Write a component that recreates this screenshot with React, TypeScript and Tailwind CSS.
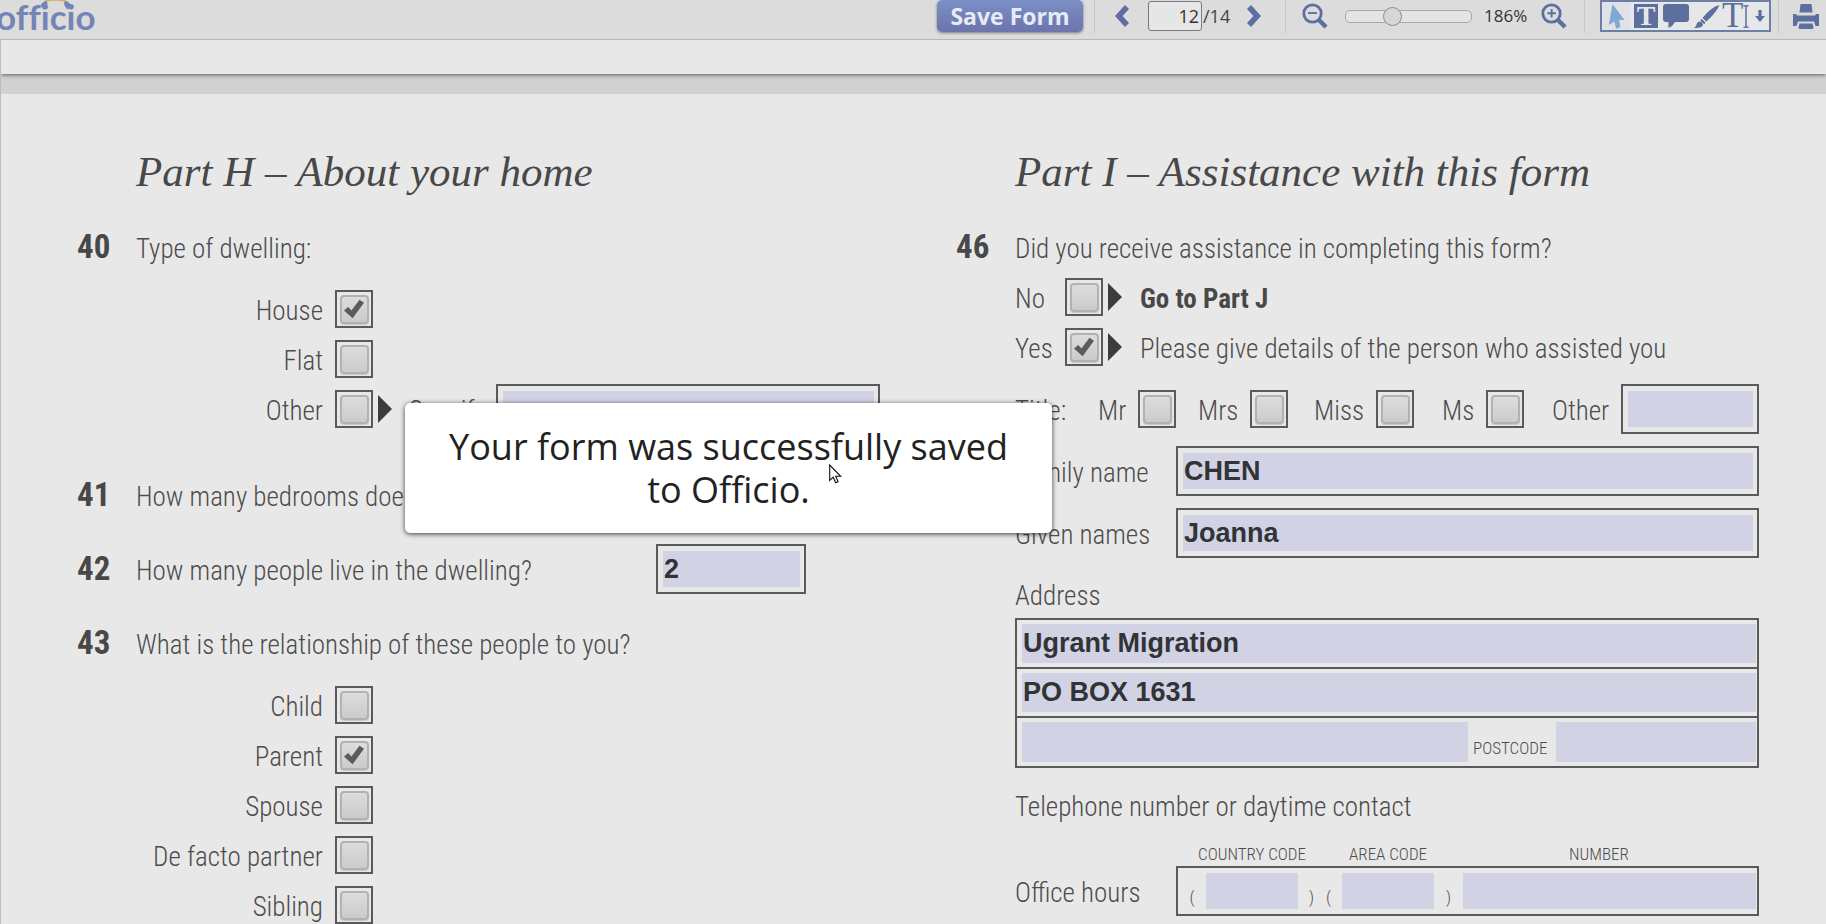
import type { ReactNode } from "react";

const BODY = "font-['Roboto_Condensed','Roboto',sans-serif] font-light";
const UI = "font-['Open_Sans','Noto_Sans',sans-serif]";

function Separator() {
  return <span className="h-[34px] w-px shrink-0 bg-[#c6c6c6]" />;
}

function Magnifier({ plus }: { plus?: boolean }) {
  return (
    <svg viewBox="0 0 26 26" className="h-[26px] w-[26px]" fill="none" stroke="#5d6f9e">
      <circle cx="10.5" cy="10.5" r="8.7" strokeWidth="2.8" />
      <path d="M17 17l7 7" strokeWidth="4.4" />
      <path d={plus ? "M6.3 10.3h8.6M10.6 6v8.6" : "M6 10h9"} strokeWidth="1.9" />
    </svg>
  );
}

function Toolbar() {
  return (
    <header className={`flex h-10 shrink-0 items-start overflow-hidden border-b border-[#b8b8b8] bg-[#dcdcdc] pr-[7px] ${UI}`}>
      <a href="#" className="relative -ml-1 block h-[39px] font-['Lato',sans-serif] text-[35px] leading-[33px] font-bold text-[#7385b4] [font-variant-ligatures:none]">
        officio
        <svg viewBox="0 0 34 10" className="absolute top-0 left-[43px] h-[10px] w-[34px]">
          <path d="M6 1.5C10-1 23-1 27 1.5" fill="none" stroke="#d9b25c" strokeWidth="2" />
          <path d="M6.500 1l2 1.500c-.2 3-1.200 5.500-4 7L1.500 5.500C2.500 3 4 2 6.500 1z" fill="#7385b4" />
          <path d="M27 1l-2 1.500c.2 3 1.200 5.500 4 7l3-4C31 3 29.500 2 27 1z" fill="#7385b4" />
        </svg>
      </a>
      <div className="ml-auto flex h-8 items-center">
        <button className="mr-[11px] h-8 w-[146px] rounded-[5px] bg-linear-to-b from-[#7b8fc6] to-[#6d74ac] text-[23px] leading-8 font-bold text-[#e6ebf6] shadow-[0_1px_3px_rgba(0,0,0,0.45)]">
          Save Form
        </button>
        <Separator />
        <button aria-label="Previous page" className="ml-5 w-[14px]">
          <svg viewBox="0 0 14 22" className="h-[22px] w-[14px]">
            <path d="M10 0l4 4-6.500 7 6.500 7-4 4L0 11z" fill="#5d6f9e" />
          </svg>
        </button>
        <input
          aria-label="Page"
          defaultValue="12"
          className="ml-[19px] h-[30px] w-[54px] rounded-[3px] border border-[#7a7a7a] bg-[#e6e6e6] px-0.5 text-right text-[18px] text-[#333]"
        />
        <span className="ml-px w-[30px] text-[18px] text-[#444]">/14</span>
        <button aria-label="Next page" className="ml-[14px] w-[15px]">
          <svg viewBox="0 0 14 22" className="h-[22px] w-[14px]">
            <path d="M4 0L0 4l6.500 7L0 18l4 4 10-11z" fill="#5d6f9e" />
          </svg>
        </button>
        <span className="w-[23px]" />
        <Separator />
        <button aria-label="Zoom out" className="ml-4 w-[26px]"><Magnifier /></button>
        <input
          type="range"
          aria-label="Zoom"
          defaultValue={35}
          className="ml-[17px] h-[13px] w-[127px] appearance-none rounded-[5px] border border-[#a9a9a9] bg-[#e4e4e4] [&::-webkit-slider-thumb]:h-[19px] [&::-webkit-slider-thumb]:w-[19px] [&::-webkit-slider-thumb]:appearance-none [&::-webkit-slider-thumb]:rounded-full [&::-webkit-slider-thumb]:border [&::-webkit-slider-thumb]:border-[#8c8c8c] [&::-webkit-slider-thumb]:bg-[#d6d6d6]"
        />
        <span className="ml-3 w-11 text-[17px] text-[#333]">186%</span>
        <button aria-label="Zoom in" className="mr-[17px] ml-[13px] w-[26px]"><Magnifier plus /></button>
        <Separator />
        <div className="mr-[7px] ml-[15px] flex h-8 w-[171px] items-center border-2 border-[#6d7fa3] bg-[#e6e7e8] text-[#5d6f9e]">
          <button aria-label="Select" className="flex h-full w-7 shrink-0 items-center justify-center bg-[#dfe3e8]">
            <svg viewBox="0 0 17 25" className="h-[25px] w-[17px]">
              <path d="M4.500 0l12 16-5.500-.2 1.500 7.400-4.300 1.500-2-7.200L.8 21z" fill="#7fa9d4" />
            </svg>
          </button>
          <button aria-label="Highlight text" className="ml-1 h-6 w-6 shrink-0 bg-[#5d6f9e] font-['Liberation_Serif',serif] text-[28px] leading-6 font-bold text-[#e6e7e8]">
            T
          </button>
          <button aria-label="Comment" className="ml-[5px] w-[26px] shrink-0">
            <svg viewBox="0 0 26 24" className="h-6 w-[26px]" fill="currentColor">
              <path d="M3 0h20q3 0 3 3v12q0 3-3 3H12q-2 4-6.500 6V18H3q-3 0-3-3V3q0-3 3-3z" />
            </svg>
          </button>
          <button aria-label="Brush" className="ml-[5px] w-[26px] shrink-0">
            <svg viewBox="0 0 26 23" className="h-[23px] w-[26px]" fill="currentColor">
              <path d="M25.500 0Q17 2 8.500 13l3.800 3.600Q22 8 25.500 0z" />
              <path d="M7.600 14l3.900 3.600-1.300 1.700-4-3.600zM5.300 16.400q3.500.7 3.700 3.800-2.500 3.400-9 2.500 2.200-1 2.500-3.200.5-2.800 2.800-3.100z" />
            </svg>
          </button>
          <button aria-label="Insert text" className="ml-0.5 flex shrink-0 items-center font-['Liberation_Serif',serif] text-[35px] leading-7">
            T
            <svg viewBox="0 0 6 23" className="h-[23px] w-[6px]" fill="none" stroke="currentColor" strokeWidth="1.500">
              <path d="M.5.8H2Q3 .8 3 2v19q0 1.200-1 1.200H.5M5.500.8H4Q3 .8 3 2M3 21q0 1.200 1 1.200h1.500" />
            </svg>
          </button>
          <button aria-label="More tools" className="ml-[6px] w-[10px] shrink-0">
            <svg viewBox="0 0 10 12" className="h-3 w-[10px]" fill="currentColor">
              <path d="M3.400 0h3.200v6H10l-5 6-5-6h3.400z" />
            </svg>
          </button>
        </div>
        <Separator />
        <button aria-label="Print" className="ml-[14px] w-[26px]">
          <svg viewBox="0 0 26 25" className="h-[25px] w-[26px]" fill="#5d6f9e">
            <path d="M7.500 0h11l1 8.500h-13z" />
            <path d="M0 10h3.500v1.500h19V10H26v12h-3.500l-1.500-4.500H5L3.500 22H0z" />
            <path d="M6.500 19.500h13l1 4q0 1.500-1.500 1.500H7q-1.500 0-1.500-1.500z" />
          </svg>
        </button>
      </div>
    </header>
  );
}

function Check({ id, checked }: { id: string; checked?: boolean }) {
  return (
    <span className="relative flex h-[38px] w-[38px] shrink-0 items-center justify-center border-2 border-[#5a5a5a]">
      <input
        id={id}
        type="checkbox"
        defaultChecked={checked}
        className="peer h-[29px] w-[29px] appearance-none rounded-[4px] border-2 border-[#b2b2b2] bg-linear-to-b from-[#dcdcdc] to-[#cbcbcb] shadow-[0_1px_1px_rgba(0,0,0,0.15)]"
      />
      <svg viewBox="0 0 20 20" className="pointer-events-none absolute hidden h-5 w-5 peer-checked:block" fill="#5b5b5b">
        <path d="M0 11.500L4.200 8l3.200 3.500L15.500.8l4.500 3L8.600 19.300z" />
      </svg>
    </span>
  );
}

const FILL = "block h-full w-full min-w-0 bg-[#d1d2e4] font-['Liberation_Sans',Arial,sans-serif] text-[27px] font-bold text-[#323336] outline-none";

function Field({ id, value, className }: { id: string; value?: string; className: string }) {
  return (
    <div className={`h-[50px] border-2 border-[#5a5a5a] py-[5px] pr-1 pl-[5px] ${className}`}>
      <input id={id} defaultValue={value} className={`${FILL} px-px`} />
    </div>
  );
}

function Label({ htmlFor, className = "", children }: { htmlFor: string; className?: string; children: ReactNode }) {
  return (
    <label htmlFor={htmlFor} className={`h-[38px] shrink-0 leading-[42px] whitespace-nowrap ${className}`}>
      {children}
    </label>
  );
}

function Pointer() {
  return (
    <svg viewBox="0 0 14 28" className="ml-[5px] h-7 w-[14px] shrink-0" fill="#3c3c3c">
      <path d="M0 0l14 14L0 28z" />
    </svg>
  );
}

function Question({ n, className = "", children }: { n: number; className?: string; children: ReactNode }) {
  return (
    <div className={`flex h-[50px] items-center ${className}`}>
      <span className="h-[38px] w-[59px] shrink-0 text-[33px] leading-[38px] font-bold text-[#484848]">{n}</span>
      {children}
    </div>
  );
}

function Line({ children }: { children: ReactNode }) {
  return <p className="h-[38px] leading-[42px] whitespace-nowrap">{children}</p>;
}

function Heading({ children }: { children: ReactNode }) {
  return (
    <h2 className="mb-5 pl-[59px] font-['Liberation_Serif',serif] text-[43px] leading-[60px] font-normal whitespace-nowrap text-[#484848] italic">
      {children}
    </h2>
  );
}

function Option({ id, label, checked, children }: { id: string; label: string; checked?: boolean; children?: ReactNode }) {
  return (
    <div className="flex h-[50px] items-center">
      <Label htmlFor={id} className="mr-3 w-[187px] text-right">{label}</Label>
      <Check id={id} checked={checked} />
      {children}
    </div>
  );
}

function TitleOption({ id, label }: { id: string; label: string }) {
  return (
    <div className="flex items-center gap-3">
      <Label htmlFor={id}>{label}</Label>
      <Check id={id} />
    </div>
  );
}

function PartH() {
  return (
    <section>
      <Heading>Part H – About your home</Heading>
      <Question n={40}><Line>Type of dwelling:</Line></Question>
      <div className="mt-3 pl-[59px]">
        <Option id="house" label="House" checked />
        <Option id="flat" label="Flat" />
        <Option id="other-dwelling" label="Other">
          <Pointer />
          <Label htmlFor="specify" className="ml-[17px] w-[87px]">Specify</Label>
          <Field id="specify" className="flex-1" />
        </Option>
      </div>
      <Question n={41} className="mt-9">
        <Label htmlFor="bedrooms">How many bedrooms does the dwelling have?</Label>
        <Field id="bedrooms" className="mr-[74px] ml-auto w-[150px]" />
      </Question>
      <Question n={42} className="mt-6">
        <Label htmlFor="people">How many people live in the dwelling?</Label>
        <Field id="people" value="2" className="mr-[74px] ml-auto w-[150px]" />
      </Question>
      <Question n={43} className="mt-6"><Line>What is the relationship of these people to you?</Line></Question>
      <div className="mt-3 pl-[59px]">
        <Option id="child" label="Child" />
        <Option id="parent" label="Parent" checked />
        <Option id="spouse" label="Spouse" />
        <Option id="partner" label="De facto partner" />
        <Option id="sibling" label="Sibling" />
      </div>
    </section>
  );
}

const PHONE_GRID = "grid grid-cols-[28px_92px_44px_92px_29px_1fr] text-[17px]";

function PartI() {
  return (
    <section>
      <Heading>Part I – Assistance with this form</Heading>
      <Question n={46}><Line>Did you receive assistance in completing this form?</Line></Question>
      <div className="pl-[59px]">
        <div className="flex h-[50px] items-center">
          <Label htmlFor="assist-no" className="w-[50px]">No</Label>
          <Check id="assist-no" />
          <Pointer />
          <strong className="ml-[18px] h-[38px] leading-[42px] font-bold text-[#484848]">Go to Part J</strong>
        </div>
        <div className="flex h-[50px] items-center">
          <Label htmlFor="assist-yes" className="w-[50px]">Yes</Label>
          <Check id="assist-yes" checked />
          <Pointer />
          <span className="ml-[18px] h-[38px] leading-[42px] whitespace-nowrap">Please give details of the person who assisted you</span>
        </div>
        <div className="mt-3 grid h-[50px] grid-cols-[83px_100px_116px_128px_110px_1fr] items-center">
          <Line>Title:</Line>
          <TitleOption id="mr" label="Mr" />
          <TitleOption id="mrs" label="Mrs" />
          <TitleOption id="miss" label="Miss" />
          <TitleOption id="ms" label="Ms" />
          <div className="flex items-center gap-3">
            <Label htmlFor="other-title">Other</Label>
            <Field id="other-title" className="flex-1" />
          </div>
        </div>
        <div className="mt-3 flex items-center">
          <Label htmlFor="family" className="w-[161px]">Family name</Label>
          <Field id="family" value="CHEN" className="flex-1" />
        </div>
        <div className="mt-3 flex items-center">
          <Label htmlFor="given" className="w-[161px]">Given names</Label>
          <Field id="given" value="Joanna" className="flex-1" />
        </div>
        <div className="mt-3 flex h-12 items-center">
          <Label htmlFor="address1">Address</Label>
        </div>
        <div className="divide-y-2 divide-[#5a5a5a] border-2 border-[#5a5a5a]">
          <div className="h-[49px] py-1 pr-px pl-[5px]">
            <input id="address1" defaultValue="Ugrant Migration" className={`${FILL} px-px`} />
          </div>
          <div className="h-[49px] py-1 pr-px pl-[5px]">
            <input aria-label="Address line 2" defaultValue="PO BOX 1631" className={`${FILL} px-px`} />
          </div>
          <div className="flex h-[48px] py-1 pr-px pl-[5px]">
            <input aria-label="Address line 3" className={`${FILL} flex-1 px-px`} />
            <label htmlFor="postcode" className="w-[88px] shrink-0 self-end pl-[5px] text-[17px] leading-7">POSTCODE</label>
            <div className="h-full w-[200px]"><input id="postcode" className={`${FILL} px-px`} /></div>
          </div>
        </div>
        <div className="mt-3 flex h-[50px] items-center"><Line>Telephone number or daytime contact</Line></div>
        <div className={`mt-3 ml-[163px] h-6 leading-6 ${PHONE_GRID}`}>
          <label htmlFor="country" className="col-start-2 flex justify-center whitespace-nowrap">COUNTRY CODE</label>
          <label htmlFor="area" className="col-start-4 flex justify-center whitespace-nowrap">AREA CODE</label>
          <label htmlFor="number" className="col-start-6 pr-6 text-center">NUMBER</label>
        </div>
        <div className="flex items-center">
          <span className="h-[38px] w-[161px] shrink-0 leading-[42px]">Office hours</span>
          <div className={`h-[50px] flex-1 border-2 border-[#5a5a5a] py-[5px] pr-px ${PHONE_GRID}`}>
            <span className="self-end text-center leading-6">(</span>
            <input id="country" className={FILL} />
            <span className="flex justify-between self-end px-[11px] leading-6"><span>)</span><span>(</span></span>
            <input id="area" className={FILL} />
            <span className="self-end text-center leading-6">)</span>
            <input id="number" className={FILL} />
          </div>
        </div>
      </div>
    </section>
  );
}

function SavedDialog() {
  return (
    <div
      role="alertdialog"
      aria-label="Form saved"
      className={`absolute top-[403px] left-[405px] w-[647px] rounded-[5px] bg-white px-10 py-[22px] text-center text-[36px] leading-[43px] text-[#222] shadow-[0_1px_5px_rgba(0,0,0,0.75)] ${UI}`}
    >
      Your form was successfully saved to Officio.
      <svg viewBox="0 0 13 20" className="absolute top-[61px] left-[424px] h-5 w-[13px]">
        <path d="M.7 1v15.500l3.500-3.300 2.500 5.600 2.400-1-2.400-5.500h5z" fill="#fff" stroke="#111" strokeWidth="1.100" />
      </svg>
    </div>
  );
}

export default function App() {
  return (
    <div className="relative flex h-screen flex-col overflow-hidden bg-[#d1d1d1]">
      <Toolbar />
      <main className={`flex min-h-0 flex-1 flex-col gap-5 overflow-hidden border-l border-[#bdbdbd] text-[27px] text-[#4c4c4c] ${BODY}`}>
        <div className="h-[34px] shrink-0 bg-[#e8e8e8] shadow-[0_1px_4px_rgba(0,0,0,0.55)]" />
        <form className="grid shrink-0 grid-cols-2 gap-[76px] bg-[#e8e8e8] pt-12 pr-[67px] pl-[76px]">
          <PartH />
          <PartI />
        </form>
      </main>
      <SavedDialog />
    </div>
  );
}
